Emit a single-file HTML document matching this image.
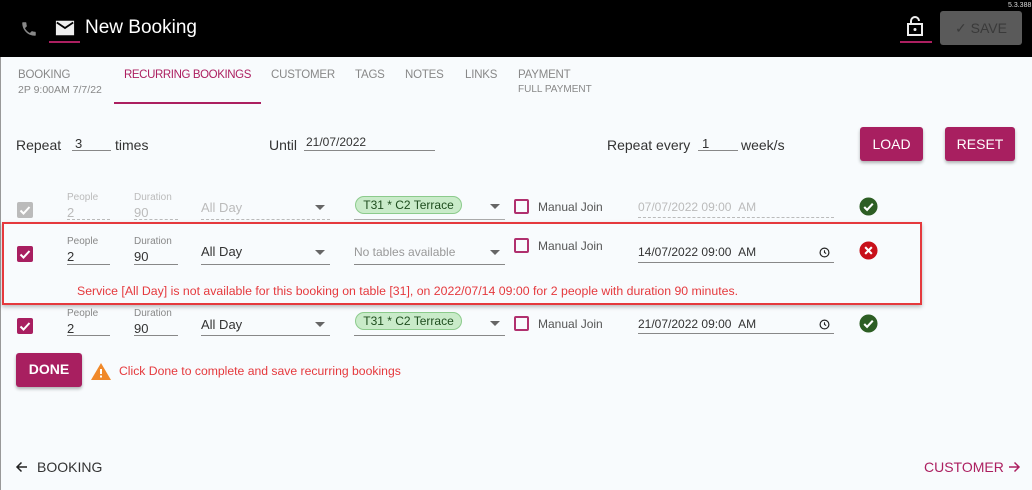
<!DOCTYPE html>
<html><head><meta charset="utf-8"><style>
*{margin:0;padding:0;box-sizing:border-box}
body{width:1032px;height:490px;overflow:hidden;background:#f8fbfd;font-family:"Liberation Sans",sans-serif;position:relative;color:#333}
.a{position:absolute;white-space:nowrap}
.hdr{position:absolute;left:0;top:0;width:1032px;height:57px;background:#000}
.mag{color:#ac1f60}
.btn{position:absolute;background:#a81f60;color:#fff;font-size:14px;border-radius:3px;text-align:center;box-shadow:0 2px 3px rgba(0,0,0,.3)}
.lbl{font-size:10px;color:#888}
.ul{position:absolute;height:1px;background:#888}
.dul{position:absolute;height:0;border-top:1px dashed #bbb}
.cb{position:absolute;width:16px;height:16px;border-radius:2px;background:#a81f60}
.cbo{position:absolute;width:15px;height:15px;border:2px solid #b0306e;border-radius:2px}
.chip{position:absolute;background:#c9ebc9;border:1px solid #8ccb8c;border-radius:10px;font-size:12px;color:#1e4d1e;text-align:center;height:18px;line-height:16px}
.tri{position:absolute;width:0;height:0;border-left:5px solid transparent;border-right:5px solid transparent;border-top:5px solid #666}
.tab{font-size:11.5px;color:#888;letter-spacing:-0.2px}
</style></head><body>
<div style="position:absolute;left:0;top:57px;width:1px;height:433px;background:#999"></div>
<div class="hdr"></div>
<svg class="a" style="left:20px;top:20px" width="18" height="18" viewBox="0 0 24 24"><path fill="#888" d="M6.6 10.8c1.4 2.8 3.8 5.1 6.6 6.6l2.2-2.2c.3-.3.7-.4 1-.2 1.1.4 2.300.6 3.6.6.6 0 1 .4 1 1V20c0 .6-.4 1-1 1C10.6 21 3 13.4 3 4c0-.6.4-1 1-1h3.5c.6 0 1 .4 1 1 0 1.3.2 2.5.6 3.6.1.3 0 .7-.2 1z"/></svg>
<svg class="a" style="left:54px;top:18px" width="22" height="20" viewBox="0 0 24 22"><path fill="#eee" d="M2 3h20v16H2z"/><path fill="none" stroke="#000" stroke-width="2" d="M3 5l9 6 9-6"/></svg>
<div class="a" style="left:49px;top:41px;width:31px;height:2px;background:#ac1f60"></div>
<div class="a" style="left:85px;top:17px;font-size:19px;color:#fff">New Booking</div>
<svg class="a" style="left:906px;top:15px" width="18" height="22" viewBox="0 0 18 22"><path fill="none" stroke="#eee" stroke-width="2" d="M5 9V6a4 4 0 0 1 8 0M2 9h14v11H2z"/><circle cx="9" cy="14.5" r="1.5" fill="#eee"/></svg>
<div class="a" style="left:900px;top:41px;width:32px;height:2px;background:#ac1f60"></div>
<div class="a" style="left:940px;top:11px;width:82px;height:34px;background:#5a5a5a;border-radius:3px;color:#3a3a3a;font-size:14px;line-height:34px;text-align:center">✓ SAVE</div>
<div class="a" style="left:1008px;top:2px;font-size:7px;color:#ddd">5.3.388</div>

<div class="a tab" style="left:18px;top:69px">BOOKING</div>
<div class="a" style="left:18px;top:84px;font-size:10.5px;color:#888">2P 9:00AM 7/7/22</div>
<div class="a tab mag" style="left:124px;top:69px;color:#ac1f60;letter-spacing:-0.4px">RECURRING BOOKINGS</div>
<div class="a" style="left:114px;top:102px;width:147px;height:2px;background:#ac1f60"></div>
<div class="a tab" style="left:271px;top:69px">CUSTOMER</div>
<div class="a tab" style="left:355px;top:69px">TAGS</div>
<div class="a tab" style="left:405px;top:69px">NOTES</div>
<div class="a tab" style="left:465px;top:69px">LINKS</div>
<div class="a tab" style="left:518px;top:69px">PAYMENT</div>
<div class="a" style="left:518px;top:84px;font-size:10px;color:#888">FULL PAYMENT</div>

<div class="a" style="left:16px;top:137px;font-size:14px">Repeat</div>
<div class="a" style="left:75px;top:136px;font-size:13px">3</div>
<div class="ul" style="left:72px;top:150px;width:39px"></div>
<div class="a" style="left:115px;top:137px;font-size:14px">times</div>
<div class="a" style="left:269px;top:137px;font-size:14px">Until</div>
<div class="a" style="left:306px;top:135px;font-size:12px">21/07/2022</div>
<div class="ul" style="left:304px;top:150px;width:131px"></div>
<div class="a" style="left:607px;top:137px;font-size:14px">Repeat every</div>
<div class="a" style="left:702px;top:136px;font-size:13px">1</div>
<div class="ul" style="left:698px;top:150px;width:40px"></div>
<div class="a" style="left:741px;top:137px;font-size:14px">week/s</div>
<div class="btn" style="left:860px;top:127px;width:63px;height:34px;line-height:34px">LOAD</div>
<div class="btn" style="left:945px;top:127px;width:70px;height:34px;line-height:34px">RESET</div>

<!-- row1 -->
<div class="cb" style="left:17px;top:202px;background:#bbb"><svg width="16" height="16"><path d="M3.5 8.5l3 3 6-6.5" stroke="#fff" stroke-width="2" fill="none"/></svg></div>
<div class="a lbl" style="left:67px;top:192px;color:#bbb">People</div><div class="a" style="left:67px;top:205px;font-size:13px;color:#bbb">2</div><div class="dul" style="left:67px;top:219px;width:43px"></div>
<div class="a lbl" style="left:134px;top:192px;color:#bbb">Duration</div><div class="a" style="left:134px;top:205px;font-size:13px;color:#bbb">90</div><div class="dul" style="left:134px;top:219px;width:44px"></div>
<div class="a" style="left:201px;top:200px;font-size:13px;color:#bbb">All Day</div><div class="tri" style="left:315px;top:205px"></div><div class="dul" style="left:201px;top:219px;width:129px"></div>
<div class="chip" style="left:355px;top:196px;width:107px">T31 * C2 Terrace</div><div class="tri" style="left:490px;top:204px"></div><div class="ul" style="left:354px;top:219px;width:151px;background:#aaa"></div>
<div class="cbo" style="left:514px;top:199px"></div><div class="a" style="left:538px;top:200px;font-size:12px;color:#555">Manual Join</div>
<div class="a" style="left:638px;top:200px;font-size:12px;color:#bbb">07/07/2022 09:00 &nbsp;AM</div><div class="dul" style="left:638px;top:217px;width:196px"></div>
<svg class="a" style="left:859px;top:197px" width="19" height="19" viewBox="0 0 20 20"><circle cx="10" cy="10" r="9.5" fill="#2d5e24"/><path d="M5.5 10.5l3 3 6-6.5" stroke="#fff" stroke-width="2.2" fill="none"/></svg>

<!-- error box -->
<div class="a" style="left:2px;top:222px;width:920px;height:83px;border:2px solid #e5393d;box-shadow:0 2px 4px rgba(0,0,0,.25)"></div>
<div class="cb" style="left:17px;top:246px"><svg width="16" height="16"><path d="M3.5 8.5l3 3 6-6.5" stroke="#fff" stroke-width="2" fill="none"/></svg></div>
<div class="a lbl" style="left:67px;top:236px">People</div><div class="a" style="left:67px;top:249px;font-size:13px">2</div><div class="ul" style="left:67px;top:264px;width:43px"></div>
<div class="a lbl" style="left:134px;top:236px">Duration</div><div class="a" style="left:134px;top:249px;font-size:13px">90</div><div class="ul" style="left:134px;top:264px;width:44px"></div>
<div class="a" style="left:201px;top:244px;font-size:13px">All Day</div><div class="tri" style="left:315px;top:250px"></div><div class="ul" style="left:201px;top:264px;width:129px"></div>
<div class="a" style="left:354px;top:245px;font-size:12px;color:#999">No tables available</div><div class="tri" style="left:490px;top:250px"></div><div class="ul" style="left:354px;top:264px;width:151px"></div>
<div class="cbo" style="left:514px;top:238px"></div><div class="a" style="left:538px;top:239px;font-size:12px;color:#555">Manual Join</div>
<div class="a" style="left:638px;top:245px;font-size:12px">14/07/2022 09:00 &nbsp;AM</div>
<svg class="a" style="left:819px;top:247px" width="11" height="11" viewBox="0 0 12 12"><circle cx="6" cy="6" r="4.8" fill="none" stroke="#222" stroke-width="1.3"/><path d="M6 3.5V6l1.8 1.2" stroke="#222" stroke-width="1.2" fill="none"/></svg>
<div class="ul" style="left:638px;top:262px;width:196px"></div>
<svg class="a" style="left:859px;top:241px" width="19" height="19" viewBox="0 0 20 20"><circle cx="10" cy="10" r="9.5" fill="#c8101a"/><path d="M6.5 6.5l7 7M13.5 6.5l-7 7" stroke="#fff" stroke-width="2.2"/></svg>
<div class="a" style="left:77px;top:284px;font-size:12.3px;color:#e5393d">Service [All Day] is not available for this booking on table [31], on 2022/07/14 09:00 for 2 people with duration 90 minutes.</div>

<!-- row3 -->
<div class="cb" style="left:17px;top:318px"><svg width="16" height="16"><path d="M3.5 8.5l3 3 6-6.5" stroke="#fff" stroke-width="2" fill="none"/></svg></div>
<div class="a lbl" style="left:67px;top:308px">People</div><div class="a" style="left:67px;top:321px;font-size:13px">2</div><div class="ul" style="left:67px;top:335px;width:43px"></div>
<div class="a lbl" style="left:134px;top:308px">Duration</div><div class="a" style="left:134px;top:321px;font-size:13px">90</div><div class="ul" style="left:134px;top:335px;width:44px"></div>
<div class="a" style="left:201px;top:317px;font-size:13px">All Day</div><div class="tri" style="left:315px;top:322px"></div><div class="ul" style="left:201px;top:335px;width:129px"></div>
<div class="chip" style="left:355px;top:312px;width:107px">T31 * C2 Terrace</div><div class="tri" style="left:490px;top:321px"></div><div class="ul" style="left:354px;top:335px;width:151px"></div>
<div class="cbo" style="left:514px;top:316px"></div><div class="a" style="left:538px;top:317px;font-size:12px;color:#555">Manual Join</div>
<div class="a" style="left:638px;top:317px;font-size:12px">21/07/2022 09:00 &nbsp;AM</div>
<svg class="a" style="left:819px;top:319px" width="11" height="11" viewBox="0 0 12 12"><circle cx="6" cy="6" r="4.8" fill="none" stroke="#222" stroke-width="1.3"/><path d="M6 3.5V6l1.8 1.2" stroke="#222" stroke-width="1.2" fill="none"/></svg>
<div class="ul" style="left:638px;top:333px;width:196px"></div>
<svg class="a" style="left:859px;top:314px" width="19" height="19" viewBox="0 0 20 20"><circle cx="10" cy="10" r="9.5" fill="#2d5e24"/><path d="M5.5 10.5l3 3 6-6.5" stroke="#fff" stroke-width="2.2" fill="none"/></svg>

<div class="btn" style="left:16px;top:353px;width:66px;height:34px;line-height:32px;font-weight:bold">DONE</div>
<svg class="a" style="left:91px;top:363px" width="20" height="17" viewBox="0 0 20 17"><path d="M10 0L20 17H0z" fill="#f0892a"/><rect x="9" y="6" width="2" height="5" fill="#fff"/><rect x="9" y="12.5" width="2" height="2" fill="#fff"/></svg>
<div class="a" style="left:119px;top:364px;font-size:12.2px;color:#e5393d">Click Done to complete and save recurring bookings</div>

<svg class="a" style="left:15px;top:461px" width="13" height="12" viewBox="0 0 13 12"><path d="M12 6H2M6.5 1.5L2 6l4.5 4.5" stroke="#222" stroke-width="1.5" fill="none"/></svg>
<div class="a" style="left:37px;top:459px;font-size:14px;color:#333">BOOKING</div>
<div class="a mag" style="left:924px;top:459px;font-size:14px">CUSTOMER</div>
<svg class="a" style="left:1008px;top:461px" width="13" height="12" viewBox="0 0 13 12"><path d="M1 6h10M6.5 1.5L11 6l-4.5 4.5" stroke="#ac1f60" stroke-width="1.5" fill="none"/></svg>
</body></html>
